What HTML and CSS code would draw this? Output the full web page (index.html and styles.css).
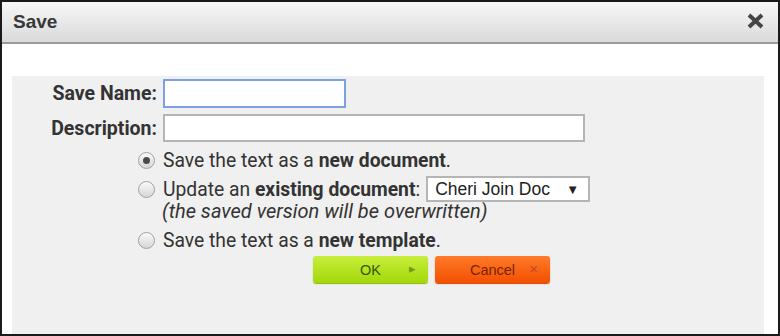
FILE: index.html
```html
<!DOCTYPE html>
<html lang="en">
<head>
  <meta charset="UTF-8" />
  <title>Save</title>
  <link rel="stylesheet" href="styles.css">
</head>
<body>

  <div class="dialog">
    <div class="title-bar">
      <span class="title">Save</span>
      <svg class="close" width="17" height="16" viewBox="0 0 17 16">
        <path d="M2 2 L15 14 M15 2 L2 14" stroke="#444" stroke-width="4" stroke-linecap="butt" />
      </svg>
    </div>

    <div class="content">
      <div class="panel">
        <div class="fields">
          <label class="field-label" for="saveName">Save Name:</label>
          <input type="text" id="saveName" class="name-input focused" />
          <label class="field-label" for="description">Description:</label>
          <input type="text" id="description" class="desc-input" />
        </div>

        <div class="options">
          <div class="option">
            <span class="radio checked"></span>
            <span>Save the text as a <b>new document</b>.</span>
          </div>
          <div class="option update">
            <span class="radio"></span>
            <span>Update an <b>existing document</b>:</span>
            <div class="select">
              <span>Cheri Join Doc</span>
              <span class="arrow">&#9660;</span>
            </div>
          </div>
          <div class="note">(the saved version will be overwritten)</div>
          <div class="option last">
            <span class="radio"></span>
            <span>Save the text as a <b>new template</b>.</span>
          </div>
        </div>

        <div class="buttons">
          <button class="btn ok">OK <span class="btn-icon">&#9656;</span></button>
          <button class="btn cancel">Cancel <span class="btn-icon">&#215;</span></button>
        </div>
      </div>
    </div>
  </div>

</body>
</html>
```

FILE: styles.css
```css
body {
  margin: 0;
  font-family: Roboto, 'Liberation Sans', sans-serif;
  color: #333;
  background: #fff;
}

.dialog {
  width: 780px;
  height: 336px;
  box-sizing: border-box;
  border: 2px solid #1a1a1a;
  display: flex;
  flex-direction: column;
}

.title-bar {
  height: 40px;
  background: linear-gradient(#f7f7f7, #dadada);
  border-bottom: 2px solid #9a9a9a;
  display: flex;
  align-items: center;
  justify-content: space-between;
  padding: 0 14px 0 11px;
}

.title {
  font-family: 'Liberation Sans', Arial, sans-serif;
  font-weight: bold;
  font-size: 19px;
  color: #383838;
}

.close {
  display: block;
  margin-top: -3px;
}

.content {
  flex: 1;
  padding: 32px 14px 0 10px;
  display: flex;
}

.panel {
  flex: 1;
  background: #f0f0f0;
  padding-top: 3px;
}

.fields {
  display: grid;
  grid-template-columns: 145px auto;
  column-gap: 6px;
  row-gap: 6px;
  align-items: center;
  justify-items: start;
}

.field-label {
  justify-self: end;
  font-weight: bold;
  font-size: 19.5px;
  color: #333;
}

input {
  font-size: 15px;
  box-sizing: border-box;
  background: #fff;
  border: 2px solid #b5b5b5;
  margin: 0;
  outline: none;
}

.name-input {
  width: 183px;
  height: 29px;
}

.name-input.focused {
  border-color: #7ca0e6;
}

.desc-input {
  width: 422px;
  height: 28px;
}

.options {
  padding-left: 126px;
  margin-top: 6px;
  font-size: 19.3px;
  color: #333;
}

.option {
  display: flex;
  align-items: center;
  gap: 8px;
  height: 24px;
}

.option.update {
  height: 28px;
  margin-top: 3px;
}

.option.last {
  height: 28px;
  margin-top: 5px;
}

.radio {
  width: 15px;
  height: 15px;
  border: 1px solid #a0a0a0;
  border-radius: 50%;
  background: linear-gradient(#fafafa, #d6d6d6);
  display: flex;
  align-items: center;
  justify-content: center;
  flex-shrink: 0;
}

.radio.checked::after {
  content: '';
  width: 7px;
  height: 7px;
  border-radius: 50%;
  background: #4a4a4a;
}

.select {
  width: 164px;
  height: 26px;
  box-sizing: border-box;
  border: 2px solid #b5b5b5;
  background: #fff;
  display: flex;
  align-items: center;
  justify-content: space-between;
  padding: 0 9px 0 7px;
  margin-left: -2px;
  font-family: 'Liberation Sans', Arial, sans-serif;
  font-size: 17.5px;
  color: #222;
}

.arrow {
  font-size: 13px;
}

.note {
  padding-left: 24px;
  font-style: italic;
  font-size: 20px;
  height: 20px;
  line-height: 20px;
  margin-top: -2px;
}

.buttons {
  display: flex;
  gap: 7px;
  padding-left: 301px;
  margin-top: 2px;
}

.btn {
  width: 115px;
  height: 27px;
  border: none;
  border-radius: 3px;
  font-family: 'Liberation Sans', Arial, sans-serif;
  font-size: 14.5px;
  position: relative;
  padding: 0;
}

.btn-icon {
  position: absolute;
  right: 12px;
  top: 5px;
  font-size: 13px;
}

.ok {
  background: linear-gradient(#c8ee3c, #a3d80a);
  color: #3b5500;
  box-shadow: 0 1px 1px #8cb800;
}

.ok .btn-icon {
  color: #6e9a10;
}

.cancel {
  background: linear-gradient(#ff7a2a, #f25000);
  color: #7a2300;
  box-shadow: 0 1px 1px #d84000;
}

.cancel .btn-icon {
  color: #c44a20;
  font-size: 15px;
  top: 4px;
}
```
